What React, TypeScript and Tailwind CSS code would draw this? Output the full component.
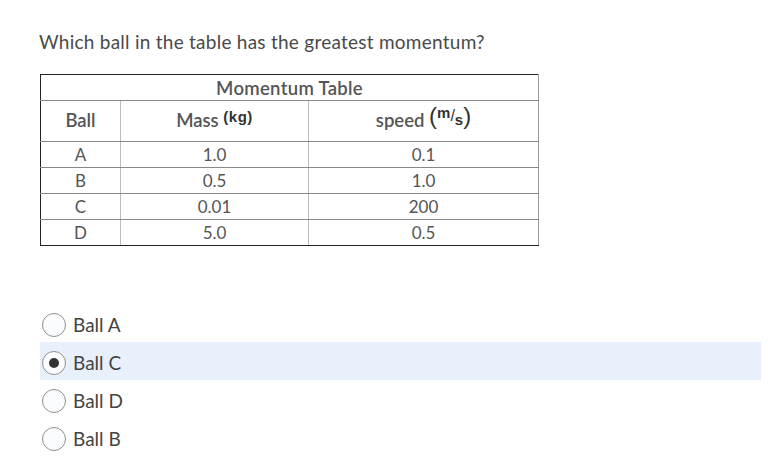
import React from 'react';

const rows = [
  ['A', '1.0', '0.1'],
  ['B', '0.5', '1.0'],
  ['C', '0.01', '200'],
  ['D', '5.0', '0.5'],
];

const options = [
  { label: 'Ball A', checked: false },
  { label: 'Ball C', checked: true },
  { label: 'Ball D', checked: false },
  { label: 'Ball B', checked: false },
];

function Radio({ checked }: { checked: boolean }) {
  return (
    <span className="flex h-[24px] w-[24px] shrink-0 items-center justify-center rounded-full border border-[#8f8f8f] bg-[#fbfcfe]">
      {checked && <span className="h-[10px] w-[10px] rounded-full bg-[#333]" />}
    </span>
  );
}

export default function App() {
  return (
    <div className="min-h-[461px] w-[784px] bg-white pt-[28px] pl-[39px] text-[#4a4a4a] [font-family:Lato,'Open_Sans',sans-serif]">
      <p className="text-[19px] leading-[27px] tracking-[0.25px]">
        Which ball in the table has the greatest momentum?
      </p>

      {/* momentum table */}
      <table className="mt-[19px] ml-[1px] w-[499px] border-collapse text-center text-[#555]">
        <thead>
          <tr className="h-[26px]">
            <th
              colSpan={3}
              className="border-t-[1.5px] border-l-[1.5px] border-r border-b border-t-[#222] border-l-[#222] border-r-[#999] border-b-[#888] text-[18.5px] font-semibold leading-[20px] tracking-[0.3px]"
            >
              Momentum Table
            </th>
          </tr>
          <tr className="h-[41px]">
            <th className="w-[80px] border-l-[1.5px] border-b border-r border-l-[#222] border-b-[#888] border-r-[#bbb] text-[18.5px] font-semibold">
              Ball
            </th>
            <th className="w-[188px] border-b border-r border-b-[#888] border-r-[#bbb] text-[18.5px] font-semibold">
              Mass{' '}
              <span className="relative top-[-5px] text-[15px] font-bold tracking-[0.5px] text-[#333] [font-family:'Liberation_Sans',Arial,sans-serif]">
                (kg)
              </span>
            </th>
            <th className="border-b border-r border-b-[#888] border-r-[#999] text-[18.5px] font-semibold">
              speed{' '}
              <span className="relative top-[-3px] inline-flex items-center text-[#333] [font-family:'Liberation_Sans',Arial,sans-serif]">
                <span className="text-[24px] font-normal leading-[24px]">(</span>
                <span className="relative top-[-4px] text-[15px] font-bold leading-none">m</span>
                <span className="text-[16px] font-normal leading-none">/</span>
                <span className="relative top-[3px] text-[15px] font-bold leading-none">s</span>
                <span className="text-[24px] font-normal leading-[24px]">)</span>
              </span>
            </th>
          </tr>
        </thead>
        <tbody>
          {rows.map((r, i) => {
            const bottom = i === 3 ? 'border-b-[1.5px] border-b-[#222]' : 'border-b border-b-[#888]';
            return (
              <tr key={r[0]} className="h-[26px] text-[17px] leading-[20px]">
                <td className={`border-l-[1.5px] border-r border-l-[#222] border-r-[#bbb] ${bottom}`}>{r[0]}</td>
                <td className={`border-r border-r-[#bbb] ${bottom}`}>{r[1]}</td>
                <td className={`border-r border-r-[#999] ${bottom}`}>{r[2]}</td>
              </tr>
            );
          })}
        </tbody>
      </table>

      {/* answer choices */}
      <div className="mt-[58px] ml-[1px] w-[721px]">
        {options.map((o) => (
          <div
            key={o.label}
            className={`flex h-[38px] items-center gap-[7px] pl-[2px] pt-[4px] ${o.checked ? 'bg-[#e8f1fb]' : ''}`}
          >
            <Radio checked={o.checked} />
            <span className="text-[19px] text-[#444]">{o.label}</span>
          </div>
        ))}
      </div>
    </div>
  );
}
